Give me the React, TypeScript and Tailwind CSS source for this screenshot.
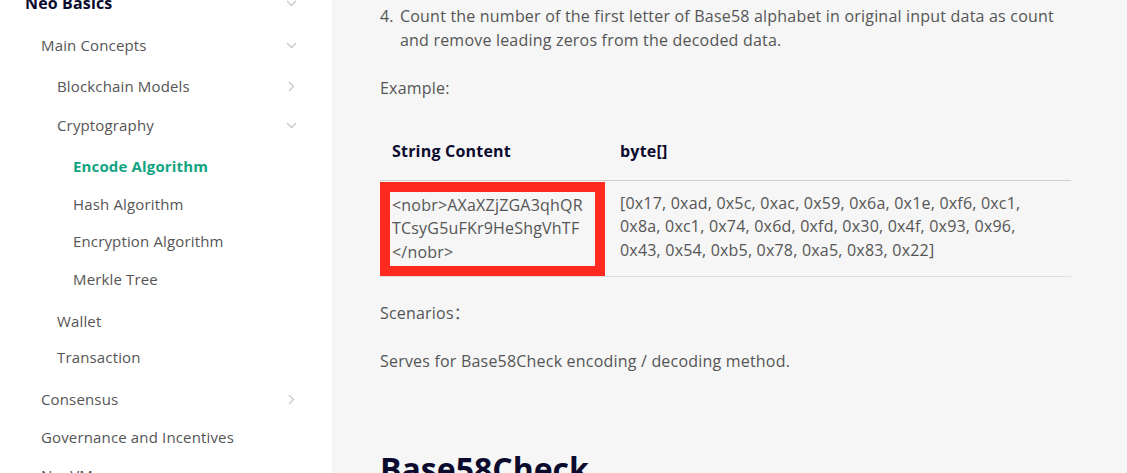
const FONT = "font-['Open_Sans','Noto_Sans_CJK_SC',sans-serif]";

type NavItem = {
  label: string;
  indent: number;
  mt: number;
  chevron?: "down" | "right";
  bold?: boolean;
  active?: boolean;
};

const nav: NavItem[] = [
  { label: "Neo Basics", indent: 25, mt: -16, chevron: "down", bold: true },
  { label: "Main Concepts", indent: 41, mt: 4, chevron: "down" },
  { label: "Blockchain Models", indent: 57, mt: 3, chevron: "right" },
  { label: "Cryptography", indent: 57, mt: 1, chevron: "down" },
  { label: "Encode Algorithm", indent: 73, mt: 3, active: true },
  { label: "Hash Algorithm", indent: 73, mt: 0 },
  { label: "Encryption Algorithm", indent: 73, mt: -1 },
  { label: "Merkle Tree", indent: 73, mt: 0 },
  { label: "Wallet", indent: 57, mt: 4 },
  { label: "Transaction", indent: 57, mt: -2 },
  { label: "Consensus", indent: 41, mt: 4, chevron: "right" },
  { label: "Governance and Incentives", indent: 41, mt: 0 },
  { label: "NeoVM", indent: 41, mt: 0 },
];

function Chevron({ dir }: { dir: "down" | "right" }) {
  if (dir === "down") {
    return (
      <svg width="11" height="7" viewBox="0 0 11 7" className="text-[#c8c8c8]">
        <polyline points="1,1 5.5,5.5 10,1" fill="none" stroke="currentColor" strokeWidth="1.3" />
      </svg>
    );
  }
  return (
    <svg width="7" height="11" viewBox="0 0 7 11" className="text-[#c8c8c8]">
      <polyline points="1,1 5.5,5.5 1,10" fill="none" stroke="currentColor" strokeWidth="1.3" />
    </svg>
  );
}

function Sidebar() {
  return (
    <aside className="w-[332px] shrink-0 bg-white tracking-[0.15px]">
      {nav.map((item) => (
        <div
          key={item.label}
          className="flex h-[38px] items-center pr-[35px]"
          style={{ marginTop: item.mt, paddingLeft: item.indent }}
        >
          <span
            className={
              item.active
                ? "flex-1 text-[15px] font-bold text-[#12a381]"
                : item.bold
                  ? "flex-1 text-[16px] font-bold text-[#0b0b2e]"
                  : "flex-1 text-[15px] text-[#555]"
            }
          >
            {item.label}
          </span>
          {item.chevron && (
            <span className="flex w-[11px] justify-center">
              <Chevron dir={item.chevron} />
            </span>
          )}
        </div>
      ))}
    </aside>
  );
}

const bytes =
  "[0x17, 0xad, 0x5c, 0xac, 0x59, 0x6a, 0x1e, 0xf6, 0xc1, 0x8a, 0xc1, 0x74, 0x6d, 0xfd, 0x30, 0x4f, 0x93, 0x96, 0x43, 0x54, 0xb5, 0x78, 0xa5, 0x83, 0x22]";

export default function App() {
  return (
    <div className={`flex h-[473px] w-[1127px] overflow-hidden ${FONT}`}>
      <Sidebar />
      <main className="flex-1 bg-[#f6f6f6] pl-[48px] text-[16px] tracking-[0.2px] text-[#555]">
        <div className="w-[691px] pt-[4px]">
          <ol className="leading-[24px]">
            <li className="flex">
              <span className="w-[20px] shrink-0">4.</span>
              <span>
                Count the number of the first letter of Base58 alphabet in original input data as count
                and remove leading zeros from the decoded data.
              </span>
            </li>
          </ol>

          <p className="mt-[24px] leading-[24px]">Example:</p>

          <table className="mt-[23px] w-full border-collapse">
            <thead>
              <tr className="border-b border-[#cfcfcf]">
                <th className="h-[57px] w-[228px] px-[12px] text-left font-bold text-[#0b0b2e]">String Content</th>
                <th className="px-[12px] text-left font-bold text-[#0b0b2e]">byte[]</th>
              </tr>
            </thead>
            <tbody>
              <tr className="border-b border-[#dedede]">
                <td className="p-0 align-top">
                  <div className="mt-[1px] w-[225px] border-[10px] border-[#ff2a1f] px-[2px] py-[2px] leading-[23.5px]">
                    &lt;nobr&gt;AXaXZjZGA3qhQR
                    <br />
                    TCsyG5uFKr9HeShgVhTF
                    <br />
                    &lt;/nobr&gt;
                  </div>
                </td>
                <td className="px-[12px] pt-[11px] align-top leading-[23.5px]">{bytes}</td>
              </tr>
            </tbody>
          </table>

          <p className="mt-[24px] leading-[24px]">Scenarios：</p>
          <p className="mt-[24px] leading-[24px]">Serves for Base58Check encoding / decoding method.</p>

          <h2 className="mt-[77px] text-[32px] font-bold leading-[38px] tracking-normal text-[#0b0b2e]">
            Base58Check
          </h2>
        </div>
      </main>
    </div>
  );
}
